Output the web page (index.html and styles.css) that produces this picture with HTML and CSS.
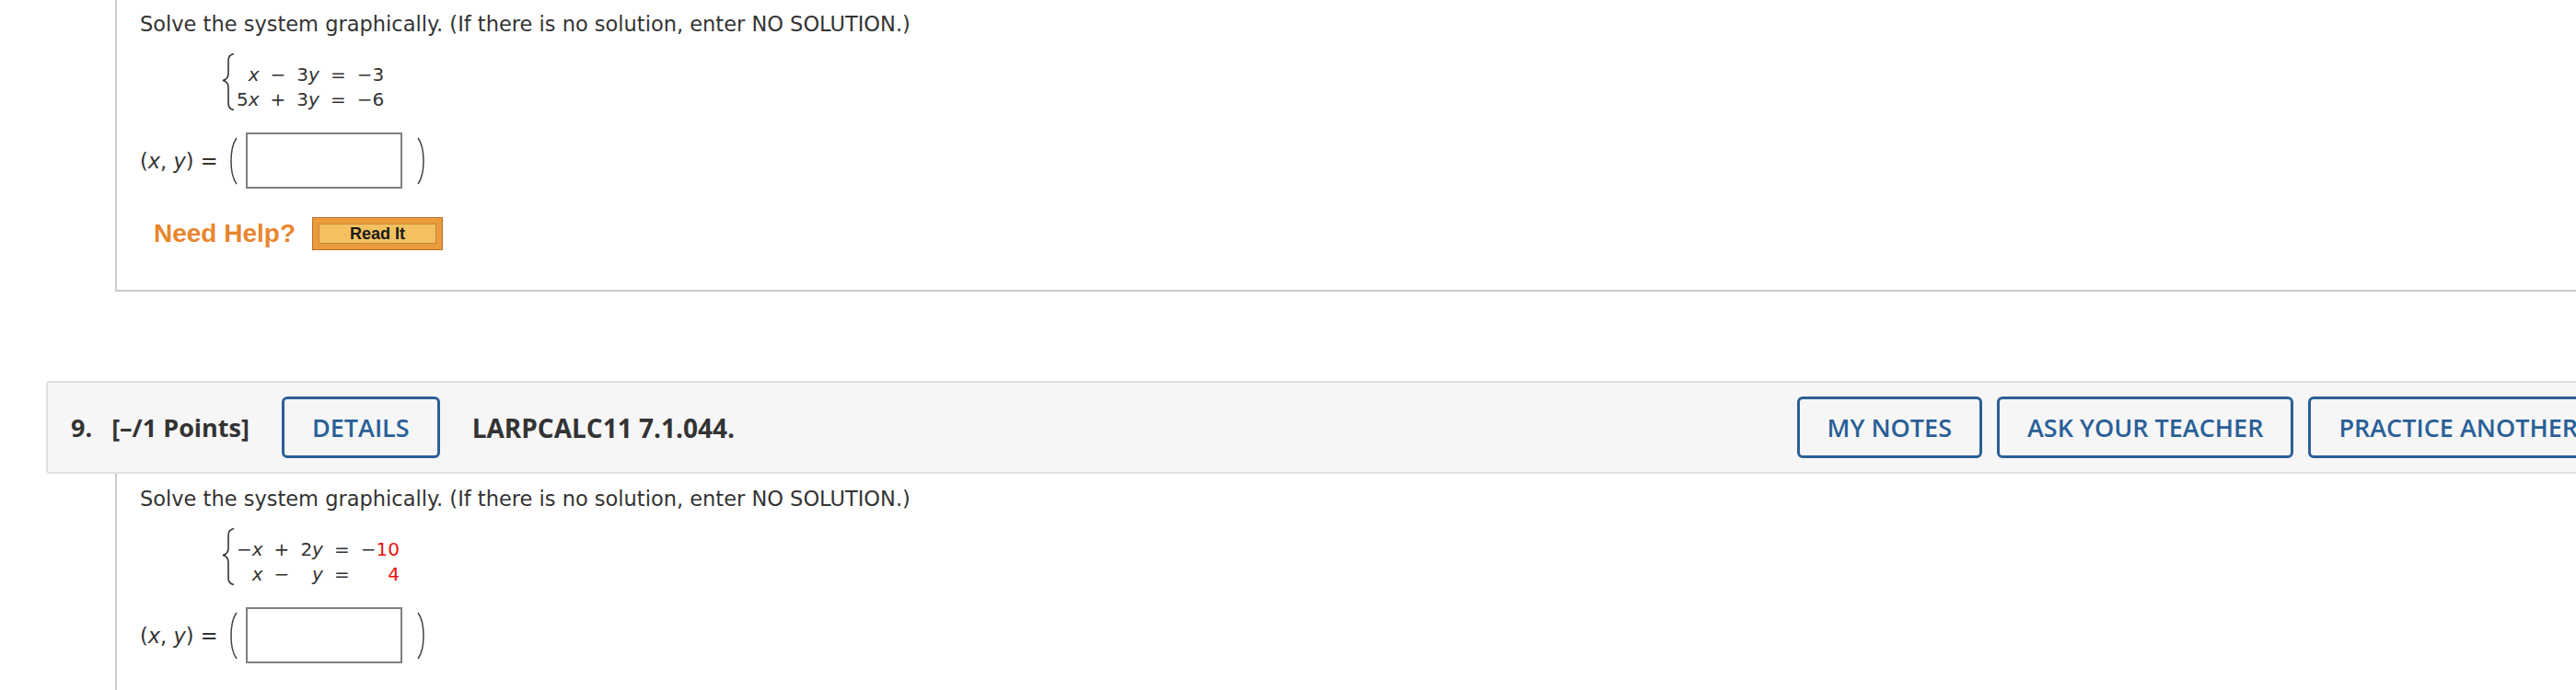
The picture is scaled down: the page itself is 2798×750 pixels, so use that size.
FILE: index.html
```html
<!DOCTYPE html>
<html lang="en">
<head>
    <meta charset="UTF-8">
    <meta name="viewport" content="width=device-width, initial-scale=1.0">
    <title>Assignment</title>
    <link rel="stylesheet" href="styles.css">
</head>
<body>
    <div class="page">
        <!-- previous question, scrolled partly out of view -->
        <div class="question">
            <div class="q-body q-body-closed">
                <p class="prompt">Solve the system graphically. (If there is no solution, enter NO SOLUTION.)</p>
                <div class="system">
                    <svg class="brace" width="16" height="64" viewBox="0 0 16 64">
                        <path d="M14 1.5 C9 2.5 8 5 8 10 L8 23 C8 27.5 6.5 29.5 2 30.5 C6.5 31.5 8 34 8 38 L8 54 C8 59 9 61.5 14 62.5" fill="none" stroke="#333" stroke-width="1.6"/>
                    </svg>
                    <div class="eqs">
                        <span class="t"><i>x</i></span><span class="op">&minus;</span><span class="t">3<i>y</i></span><span class="op">=</span><span class="t">&minus;3</span>
                        <span class="t">5<i>x</i></span><span class="op">+</span><span class="t">3<i>y</i></span><span class="op">=</span><span class="t">&minus;6</span>
                    </div>
                </div>
                <div class="answer">
                    <span class="lhs">(<i>x</i>, <i>y</i>) =</span>
                    <svg class="paren" width="12" height="52" viewBox="0 0 12 52">
                        <path d="M10 1 C2 12 2 40 10 51" fill="none" stroke="#444" stroke-width="1.5"/>
                    </svg>
                    <input type="text" class="answer-box">
                    <svg class="paren paren-right" width="12" height="52" viewBox="0 0 12 52">
                        <path d="M2 1 C10 12 10 40 2 51" fill="none" stroke="#444" stroke-width="1.5"/>
                    </svg>
                </div>
                <div class="help">
                    <span class="need-help">Need Help?</span>
                    <button type="button" class="read-it"><span>Read It</span></button>
                </div>
            </div>
        </div>

        <div class="question">
            <div class="q-header">
                <span class="q-num">9.</span>
                <span class="q-points">[&ndash;/1 Points]</span>
                <button type="button" class="btn">DETAILS</button>
                <span class="q-ref">LARPCALC11 7.1.044.</span>
                <div class="q-actions">
                    <button type="button" class="btn">MY NOTES</button>
                    <button type="button" class="btn">ASK YOUR TEACHER</button>
                    <button type="button" class="btn">PRACTICE ANOTHER</button>
                </div>
            </div>
            <div class="q-body">
                <p class="prompt">Solve the system graphically. (If there is no solution, enter NO SOLUTION.)</p>
                <div class="system">
                    <svg class="brace" width="16" height="64" viewBox="0 0 16 64">
                        <path d="M14 1.5 C9 2.5 8 5 8 10 L8 23 C8 27.5 6.5 29.5 2 30.5 C6.5 31.5 8 34 8 38 L8 54 C8 59 9 61.5 14 62.5" fill="none" stroke="#333" stroke-width="1.6"/>
                    </svg>
                    <div class="eqs">
                        <span class="t">&minus;<i>x</i></span><span class="op">+</span><span class="t">2<i>y</i></span><span class="op">=</span><span class="t">&minus;<span class="red">10</span></span>
                        <span class="t"><i>x</i></span><span class="op">&minus;</span><span class="t"><i>y</i></span><span class="op">=</span><span class="t"><span class="red">4</span></span>
                    </div>
                </div>
                <div class="answer">
                    <span class="lhs">(<i>x</i>, <i>y</i>) =</span>
                    <svg class="paren" width="12" height="52" viewBox="0 0 12 52">
                        <path d="M10 1 C2 12 2 40 10 51" fill="none" stroke="#444" stroke-width="1.5"/>
                    </svg>
                    <input type="text" class="answer-box">
                    <svg class="paren paren-right" width="12" height="52" viewBox="0 0 12 52">
                        <path d="M2 1 C10 12 10 40 2 51" fill="none" stroke="#444" stroke-width="1.5"/>
                    </svg>
                </div>
            </div>
        </div>
    </div>
</body>
</html>
```

FILE: styles.css
```css
html, body {
    overflow: hidden;
}
body {
    margin: 0;
    background: #fff;
    color: #333;
    font-family: "DejaVu Sans", Verdana, sans-serif;
}
.page {
    width: 2811px;
    padding-left: 50px;
}
.question {
    margin-bottom: 97px;
}

/* question header bar */
.q-header {
    display: flex;
    align-items: center;
    gap: 35px;
    padding: 15px 26px 15px 25px;
    background: #f6f6f6;
    border: 2px solid #e0e0e0;
    border-radius: 4px;
    font-family: "Open Sans", sans-serif;
    font-size: 27px;
    font-weight: 700;
    color: #333;
}
.q-num {
    margin-right: -14px;
}
.q-ref {
    font-size: 28px;
}
.btn {
    height: 67px;
    padding: 0 30px;
    background: transparent;
    border: 3px solid #2a6096;
    border-radius: 6px;
    color: #2a6096;
    font-family: "Open Sans", sans-serif;
    font-size: 27px;
    font-weight: 600;
}
.q-actions {
    display: flex;
    gap: 16px;
    margin-left: auto;
}

/* question body */
.q-body {
    margin-left: 75px;
    padding: 14px 0 60px 25px;
    border-left: 2px solid #ccc;
}
.q-body-closed {
    margin-top: -1px;
    padding-bottom: 43px;
    border-bottom: 2px solid #ccc;
}
.prompt {
    margin: 0;
    font-size: 22.5px;
    line-height: 26px;
}
.system {
    display: flex;
    align-items: flex-end;
    margin: 18px 0 0 88px;
}
.brace {
    display: block;
    margin-right: 1px;
}
.eqs {
    display: grid;
    grid-template-columns: repeat(5, auto);
    grid-auto-rows: 27px;
    column-gap: 12px;
    align-items: center;
    font-size: 20px;
}
.eqs .t {
    text-align: right;
}
.eqs .op {
    text-align: center;
}
.red {
    color: #e8130f;
}
.answer {
    display: flex;
    align-items: center;
    margin-top: 23px;
    font-size: 22.5px;
}
.lhs {
    margin-right: 10px;
}
.paren {
    display: block;
    margin-right: 8px;
}
.paren-right {
    margin: 0 0 0 15px;
}
.answer-box {
    width: 170px;
    height: 61px;
    box-sizing: border-box;
    margin: 0;
    border: 2px solid #7f7f7f;
    background: #fff;
}
.help {
    display: flex;
    align-items: center;
    margin: 31px 0 0 15px;
}
.need-help {
    margin-right: 18px;
    color: #e8862e;
    font-family: "Liberation Sans", Arial, sans-serif;
    font-size: 28px;
    font-weight: 700;
}
.read-it {
    width: 142px;
    height: 36px;
    padding: 6px 6px;
    background: #eb9a3c;
    border: 1px solid #b8702e;
    box-sizing: border-box;
}
.read-it span {
    display: block;
    height: 100%;
    box-sizing: border-box;
    background: #f3c160;
    border: 1px solid #c8873a;
    color: #1a1a1a;
    font-family: "Liberation Sans", Arial, sans-serif;
    font-size: 18px;
    font-weight: 700;
    line-height: 20px;
}
```
